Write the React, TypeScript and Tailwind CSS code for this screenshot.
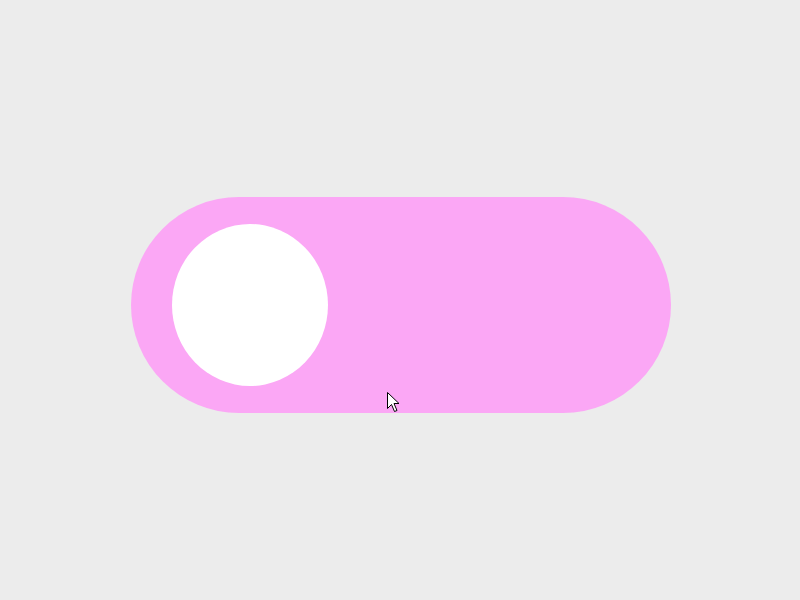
export default function App() {
  return (
    <div className="relative w-[800px] h-[600px] bg-[#ececec] overflow-hidden">
      <div className="pt-[197px] pl-[131px]">
        <div className="w-[540px] h-[216px] rounded-full bg-[#fba7f5] flex items-center pl-[41px]">
          <div className="w-[156px] h-[162px] rounded-[50%] bg-white" />
        </div>
      </div>
      <svg
        className="absolute left-[387px] top-[392px]"
        width="13"
        height="21"
        viewBox="0 0 13 21"
      >
        <path
          d="M0.5 0.5 L0.5 16.5 L4.5 12.5 L7.5 19.5 L10 18.5 L7 11.5 L12 11.5 Z"
          fill="white"
          stroke="black"
          strokeWidth="1"
          strokeLinejoin="miter"
        />
      </svg>
    </div>
  );
}
